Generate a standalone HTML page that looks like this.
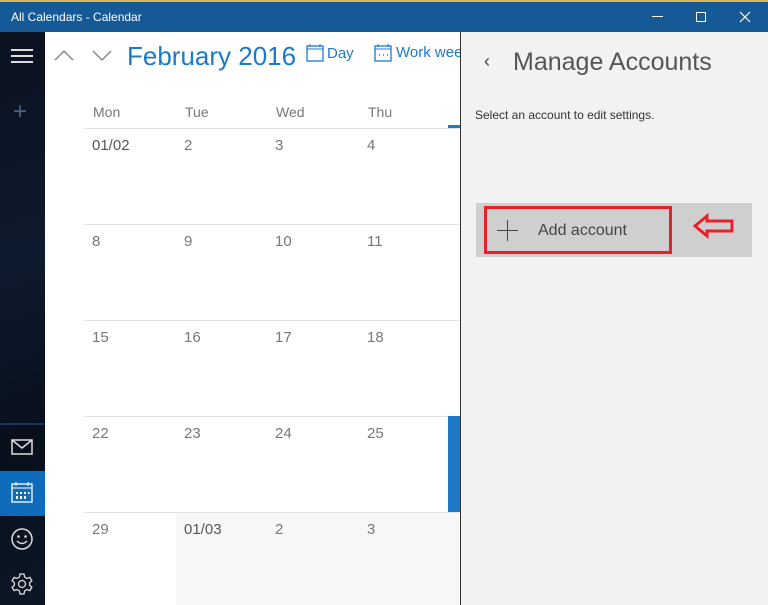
<!DOCTYPE html>
<html><head><meta charset="utf-8"><style>
*{margin:0;padding:0;box-sizing:border-box}
body{width:768px;height:605px;overflow:hidden;font-family:"Liberation Sans",sans-serif;background:#fff;position:relative}
.a{position:absolute}
.title{left:0;top:0;width:768px;height:32px;background:#155996;border-top:2px solid #d8b860;color:#fff;font-size:12px}
.side{left:0;top:32px;width:45px;height:573px;background:linear-gradient(160deg,#0b1220,#0e1a2e 40%,#09101c 70%,#0c1626)}
.cal{left:45px;top:32px;width:415px;height:573px;background:#fff}
.d{font-size:15px;color:#777}
.hd{font-size:14px;color:#777}
.hl{height:1px;background:#e2e2e2;left:84px;width:376px}
.panel{left:460px;top:32px;width:308px;height:573px;background:#f2f2f2;border-left:1px solid #333}
</style></head><body>
<div class="a title"><span class="a" style="left:11px;top:8px">All Calendars - Calendar</span>
<span class="a" style="left:652px;top:14px;width:11px;height:1px;background:#fff"></span>
<span class="a" style="left:696px;top:10px;width:10px;height:10px;border:1px solid #fff"></span>
<svg class="a" style="left:739px;top:9px" width="12" height="12"><path d="M1 1L11 11M11 1L1 11" stroke="#fff" stroke-width="1.2"/></svg></div>
<div class="a side">
<div class="a" style="left:11px;top:17px;width:22px;height:2px;background:#ddd;box-shadow:0 6px #ddd,0 12px #ddd"></div>
<div class="a" style="left:13px;top:66px;color:#4a6080;font-size:24px;font-weight:100">+</div>
<div class="a" style="left:0;top:391px;width:45px;height:2px;background:#183055"></div>
<svg class="a" style="left:11px;top:407px" width="22" height="16"><rect x="1" y="1" width="20" height="14" fill="none" stroke="#ddd" stroke-width="1.5"/><path d="M1 1 L11 9 L21 1" fill="none" stroke="#ddd" stroke-width="1.5"/></svg>
<div class="a" style="left:0;top:439px;width:45px;height:45px;background:#0f6cbd"></div>
<svg class="a" style="left:11px;top:449px" width="22" height="22"><rect x="1" y="3" width="20" height="18" fill="none" stroke="#fff" stroke-width="1.3"/><path d="M5 1v4M17 1v4M1 7h20" stroke="#fff"/><g fill="#fff"><rect x="5" y="11" width="2" height="2"/><rect x="9" y="11" width="2" height="2"/><rect x="13" y="11" width="2" height="2"/><rect x="17" y="11" width="1.5" height="2"/><rect x="5" y="15" width="2" height="3"/><rect x="9" y="15" width="2" height="3"/><rect x="13" y="15" width="2" height="3"/></g></svg>
<svg class="a" style="left:11px;top:496px" width="22" height="22"><circle cx="11" cy="11" r="10" fill="none" stroke="#ddd" stroke-width="1.5"/><circle cx="7.5" cy="8.5" r="1.3" fill="#ddd"/><circle cx="14.5" cy="8.5" r="1.3" fill="#ddd"/><path d="M6 13q5 5 10 0" fill="none" stroke="#ddd" stroke-width="1.5"/></svg>
<svg class="a" style="left:11px;top:541px" width="22" height="22" viewBox="0 0 22 22"><path d="M9 1h4l.6 3 2.4 1.4 2.9-1 2 3.4-2.3 2v2.4l2.3 2-2 3.4-2.9-1L13.6 18 13 21H9l-.6-3-2.4-1.4-2.9 1-2-3.4 2.3-2V9.8L1.1 7.8l2-3.4 2.9 1L8.4 4z" fill="none" stroke="#ddd" stroke-width="1.3"/><circle cx="11" cy="11" r="3.5" fill="none" stroke="#ddd" stroke-width="1.3"/></svg>
</div>
<div class="a cal"></div>
<svg class="a" style="left:53px;top:47px" width="65" height="16"><path d="M2 13L11 4L20 13M40 4L49 13L58 4" fill="none" stroke="#888" stroke-width="1.5"/></svg>
<div class="a" style="left:127px;top:41px;font-size:26px;color:#1e78c8">February 2016</div>
<svg class="a" style="left:306px;top:44px" width="18" height="18"><rect x="1" y="2" width="16" height="15" fill="none" stroke="#1e78c8" stroke-width="1.3"/><path d="M1 5h16M4 0v3M14 0v3" stroke="#1e78c8"/></svg>
<div class="a" style="left:327px;top:45px;font-size:15px;color:#1e78c8">Day</div>
<svg class="a" style="left:374px;top:44px" width="18" height="18"><rect x="1" y="2" width="16" height="15" fill="none" stroke="#1e78c8" stroke-width="1.3"/><path d="M1 5h16M4 0v3M14 0v3" stroke="#1e78c8"/><path d="M5 11h1M9 11h1M13 11h1" stroke="#1e78c8" stroke-width="1.5"/></svg>
<div class="a" style="left:396px;top:44px;font-size:15px;color:#1e78c8;width:64px;overflow:hidden;white-space:nowrap">Work week</div>
<div class="a hd" style="left:93px;top:104px">Mon</div><div class="a hd" style="left:185px;top:104px">Tue</div><div class="a hd" style="left:276px;top:104px">Wed</div><div class="a hd" style="left:368px;top:104px">Thu</div>
<div class="a" style="left:448px;top:125px;width:12px;height:3px;background:#1e78c8"></div>
<div class="a hl" style="top:128px"></div><div class="a hl" style="top:224px"></div><div class="a hl" style="top:320px"></div><div class="a hl" style="top:416px"></div><div class="a hl" style="top:512px"></div>
<div class="a" style="left:176px;top:513px;width:284px;height:92px;background:#f7f7f7"></div>
<div class="a" style="left:448px;top:416px;width:12px;height:96px;background:#1e78c8"></div>
<div class="a d" style="left:92px;top:137px;color:#555">01/02</div><div class="a d" style="left:184px;top:137px">2</div><div class="a d" style="left:275px;top:137px">3</div><div class="a d" style="left:367px;top:137px">4</div>
<div class="a d" style="left:92px;top:233px">8</div><div class="a d" style="left:184px;top:233px">9</div><div class="a d" style="left:275px;top:233px">10</div><div class="a d" style="left:367px;top:233px">11</div>
<div class="a d" style="left:92px;top:329px">15</div><div class="a d" style="left:184px;top:329px">16</div><div class="a d" style="left:275px;top:329px">17</div><div class="a d" style="left:367px;top:329px">18</div>
<div class="a d" style="left:92px;top:425px">22</div><div class="a d" style="left:184px;top:425px">23</div><div class="a d" style="left:275px;top:425px">24</div><div class="a d" style="left:367px;top:425px">25</div>
<div class="a d" style="left:92px;top:521px">29</div><div class="a d" style="left:184px;top:521px;color:#555">01/03</div><div class="a d" style="left:275px;top:521px">2</div><div class="a d" style="left:367px;top:521px">3</div>
<div class="a panel">
<div class="a" style="left:23px;top:19px;font-size:18px;color:#444">‹</div>
<div class="a" style="left:52px;top:16px;font-size:25px;color:#555">Manage Accounts</div>
<div class="a" style="left:14px;top:76px;font-size:12px;color:#333">Select an account to edit settings.</div>
<div class="a" style="left:15px;top:171px;width:276px;height:54px;background:#cfcfcf"></div>
<div class="a" style="left:23px;top:174px;width:188px;height:48px;border:3px solid #e8202a"></div>
<div class="a" style="left:36px;top:198px;width:21px;height:1px;background:#444"></div>
<div class="a" style="left:46px;top:188px;width:1px;height:21px;background:#444"></div>
<div class="a" style="left:77px;top:190px;font-size:16px;color:#444">Add account</div>
<svg class="a" style="left:232px;top:181px" width="42" height="26"><path d="M2 13L14 3V8H39V18H14V23Z" fill="none" stroke="#e8202a" stroke-width="3"/></svg>
</div>
</body></html>
